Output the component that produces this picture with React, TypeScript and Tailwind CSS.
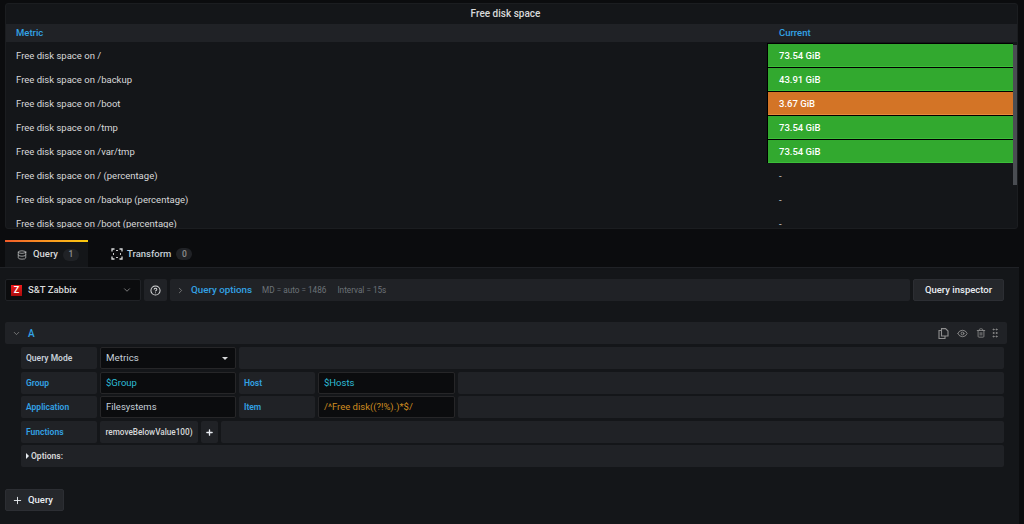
import { ChevronDown, ChevronRight, Database, Eye, GripVertical, HelpCircle, Plus, Trash2 } from 'lucide-react';

const rows = [
  { name: 'Free disk space on /', value: '73.54 GiB', color: 'green' },
  { name: 'Free disk space on /backup', value: '43.91 GiB', color: 'green' },
  { name: 'Free disk space on /boot', value: '3.67 GiB', color: 'orange' },
  { name: 'Free disk space on /tmp', value: '73.54 GiB', color: 'green' },
  { name: 'Free disk space on /var/tmp', value: '73.54 GiB', color: 'green' },
  { name: 'Free disk space on / (percentage)', value: '-', color: '' },
  { name: 'Free disk space on /backup (percentage)', value: '-', color: '' },
  { name: 'Free disk space on /boot (percentage)', value: '-', color: '' },
];

function TransformIcon() {
  return (
    <svg width="12" height="12" viewBox="0 0 12 12" fill="none" stroke="#d8d9da" strokeWidth="1.3">
      <path d="M1 3.5V1h2.5M8.5 1H11v2.5M11 8.5V11H8.5M3.5 11H1V8.5" />
      <path d="M5 2.5h2M5 9.5h2M2.5 5v2M9.5 5v2" strokeWidth="0.9" />
    </svg>
  );
}

function DuplicateIcon() {
  return (
    <svg width="11" height="11" viewBox="0 0 11 11" fill="none" stroke="#8e8e8e" strokeWidth="1.1">
      <path d="M3.5 2.5H1v8h6V8" />
      <path d="M3.5 .6h4l2.5 2.5V8h-6.500z" />
    </svg>
  );
}

function Label({ text, blue, className = 'w-[76px]' }: { text: string; blue?: boolean; className?: string }) {
  return (
    <div className={`${className} shrink-0 h-full bg-[#202226] rounded-[2px] flex items-center px-[5px] text-[8.5px] font-semibold ${blue ? 'text-[#33a2e5]' : 'text-[#c7d0d9]'}`}>
      {text}
    </div>
  );
}

function Input({ text, color = 'text-[#c7d0d9]', width = 'w-[136px]' }: { text: string; color?: string; width?: string }) {
  return (
    <div className={`${width} shrink-0 h-full bg-[#0b0c0e] border border-[#262628] rounded-[2px] flex items-center px-[5px] text-[9.5px] ${color}`}>
      {text}
    </div>
  );
}

function Filler() {
  return <div className="flex-1 h-full bg-[#202226] rounded-[2px]" />;
}

export default function App() {
  return (
    <div className="w-[1024px] h-[524px] overflow-hidden bg-[#0b0c0e] text-[#d8d9da] font-['Roboto',sans-serif] flex flex-col">
      {/* Table panel */}
      <div className="mt-[3px] ml-[5px] w-[1013px] h-[226px] shrink-0 bg-[#141619] border border-[#1b1d20] rounded-[3px] overflow-hidden flex flex-col">
        <div className="h-[20px] shrink-0 flex items-center justify-center pb-[2px] pr-[12px] text-[10px] font-medium text-[#d8d9da]">Free disk space</div>
        <div className="h-[18px] shrink-0 bg-[#202226] flex items-center text-[9.5px] font-medium text-[#33a2e5]">
          <div className="w-[762px] pl-[10px]">Metric</div>
          <div className="pl-[11px]">Current</div>
        </div>
        <div className="flex-1 min-h-0 pt-[1px] relative">
          {rows.map((row) => (
            <div key={row.name} className="h-[24px] flex items-center text-[9.5px]">
              <div className="w-[761px] pl-[10px] pt-[2px] text-[#d8d9da]">{row.name}</div>
              <div
                className={`w-[246px] h-[24px] flex items-center pl-[11px] pt-[2px] ${
                  row.color === 'green'
                    ? 'bg-[#32a92f] text-white font-medium border-t border-l border-black shadow-[inset_0_-1px_0_#3cbf39]'
                    : row.color === 'orange'
                      ? 'bg-[#d37426] text-white font-medium border-t border-l border-black shadow-[inset_0_-1px_0_#e68a3c]'
                      : 'text-[#d8d9da] ml-[1px]'
                }`}
              >
                {row.value}
              </div>
            </div>
          ))}
          <div className="absolute right-0 top-[3px] w-[4px] h-[140px] bg-[#4a4d52]" />
        </div>
      </div>

      {/* Tabs */}
      <div className="h-[11px] shrink-0" />
      <div className="h-[27px] shrink-0 flex pl-[5px] relative">
        <div className="w-[83px] h-[27px] bg-[#141619] flex items-center pl-[12px] text-[9.5px] font-medium text-[#d8d9da] border-t-2 border-transparent bg-clip-padding relative">
          <div className="absolute -top-[2px] left-0 right-0 h-[2px] bg-gradient-to-r from-[#f05a28] to-[#fbca0a]" />
          <Database size={10} strokeWidth={1.6} />
          <span className="ml-[6px]">Query</span>
          <span className="ml-[5px] w-[16px] h-[12px] rounded-full bg-[#202226] text-[8.5px] text-[#8e8e8e] flex items-center justify-center">1</span>
        </div>
        <div className="ml-[23px] pt-[1px] flex items-center text-[9.5px] font-medium text-[#c7d0d9]">
          <TransformIcon />
          <span className="ml-[4px]">Transform</span>
          <span className="ml-[5px] w-[16px] h-[12px] rounded-full bg-[#202226] text-[8.5px] text-[#8e8e8e] flex items-center justify-center">0</span>
        </div>
      </div>

      {/* Editor */}
      <div className="flex-1 w-[1019px] bg-[#141619] border-t border-[#202226] pl-[5px] pr-[3px] flex flex-col">
        <div className="mt-[11px] h-[22px] flex gap-[3px] shrink-0">
          <div className="w-[136px] h-full bg-[#0b0c0e] border border-[#202226] rounded-[2px] flex items-center pl-[5px] pr-[8px] text-[9.5px] font-medium">
            <span className="w-[11px] h-[11px] bg-gradient-to-b from-[#f01c1c] to-[#a80b0b] text-white text-[9px] font-bold leading-none flex items-center justify-center">Z</span>
            <span className="ml-[6px] flex-1">S&amp;T Zabbix</span>
            <ChevronDown size={10} className="text-[#8e8e8e]" />
          </div>
          <div className="w-[23px] h-full bg-[#202226] rounded-[2px] flex items-center justify-center">
            <HelpCircle size={11} strokeWidth={2.2} className="text-[#d8d9da]" />
          </div>
          <div className="w-[740px] h-full bg-[#202226] rounded-[2px] flex items-center pl-[6px] text-[8.2px] text-[#6d7278]">
            <ChevronRight size={9} className="text-[#8e8e8e]" />
            <span className="ml-[6px] text-[9.8px] font-medium text-[#33a2e5]">Query options</span>
            <span className="ml-[10px]">MD = auto = 1486</span>
            <span className="ml-[11px]">Interval = 15s</span>
          </div>
          <div className="w-[91px] h-full bg-[#25272b] border border-[#2c2e33] rounded-[2px] flex items-center justify-center text-[9.5px] font-medium text-[#e9edf2]">
            Query inspector
          </div>
        </div>

        <div className="mt-[21px] h-[22px] w-[1002px] bg-[#202226] rounded-[2px] flex items-center pl-[7px] pr-[6px] shrink-0">
          <ChevronDown size={9} className="text-[#8e8e8e]" />
          <span className="ml-[7px] text-[10px] font-medium text-[#33a2e5]">A</span>
          <div className="ml-auto flex items-center gap-[8px] text-[#8e8e8e]">
            <DuplicateIcon />
            <Eye size={11} />
            <Trash2 size={10} />
            <GripVertical size={12} className="-ml-[5px]" />
          </div>
        </div>

        <div className="ml-[16px] w-[983px] flex flex-col shrink-0">
          <div className="mt-[3px] h-[22px] flex gap-[3px]">
            <Label text="Query Mode" />
            <div className="w-[136px] shrink-0 h-full bg-[#0b0c0e] border border-[#262628] rounded-[2px] flex items-center justify-between pl-[5px] pr-[7px] text-[9.8px] text-[#c7d0d9]">
              Metrics
              <span className="w-0 h-0 border-x-[3px] border-x-transparent border-t-[3px] border-t-[#d8d9da]" />
            </div>
            <Filler />
          </div>
          <div className="mt-[3px] h-[22px] flex gap-[3px]">
            <Label text="Group" blue />
            <Input text="$Group" color="text-[#2dbcd6]" />
            <Label text="Host" blue />
            <Input text="$Hosts" color="text-[#2dbcd6]" width="w-[137px]" />
            <Filler />
          </div>
          <div className="mt-[2px] h-[22px] flex gap-[3px]">
            <Label text="Application" blue />
            <Input text="Filesystems" />
            <Label text="Item" blue />
            <Input text="/^Free disk((?!%).)*$/" color="text-[#cf8c20]" width="w-[137px]" />
            <Filler />
          </div>
          <div className="mt-[3px] h-[22px] flex gap-[3px]">
            <Label text="Functions" blue />
            <div className="w-[98px] shrink-0 h-full bg-[#202226] rounded-[2px] flex items-center justify-center text-[8.2px] font-medium text-[#d8d9da]">removeBelowValue100)</div>
            <div className="w-[17px] shrink-0 h-full bg-[#202226] rounded-[2px] flex items-center justify-center">
              <Plus size={9} strokeWidth={3.5} className="text-[#e9edf2]" />
            </div>
            <Filler />
          </div>
          <div className="mt-[2px] h-[22px] bg-[#202226] rounded-[2px] flex items-center pl-[5px] text-[8.5px] font-semibold text-[#d8d9da]">
            <span className="w-0 h-0 border-y-[3px] border-y-transparent border-l-[3px] border-l-[#e9edf2] mr-[2px]" />
            Options:
          </div>
        </div>

        <div className="mt-[22px] w-[59px] h-[22px] shrink-0 bg-[#25272b] border border-[#2c2e33] rounded-[2px] flex items-center pl-[6px] text-[9.5px] font-medium text-[#e9edf2]">
          <Plus size={11} />
          <span className="ml-[5px]">Query</span>
        </div>
      </div>
    </div>
  );
}
